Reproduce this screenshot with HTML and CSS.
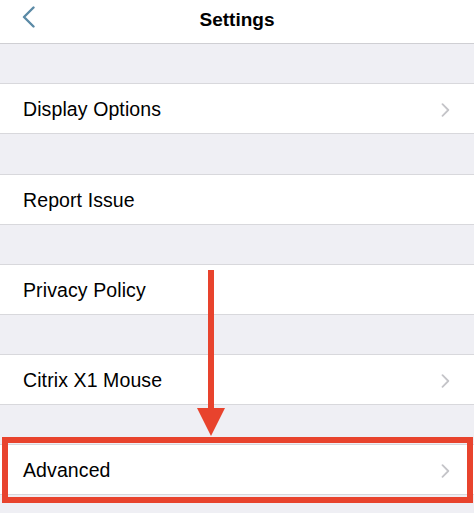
FILE: index.html
```html
<!DOCTYPE html>
<html>
<head>
<meta charset="utf-8">
<link rel="stylesheet" href="styles.css">
</head>
<body>
<div class="screen">
  <header class="nav">
    <svg class="back" width="14" height="22" viewBox="0 0 14 22"><path d="M11.5 1.5 L2 11 L11.5 20.5" fill="none" stroke="#5b8aa6" stroke-width="2.4" stroke-linecap="round" stroke-linejoin="round"/></svg>
    <h1 class="title">Settings</h1>
  </header>
  <div class="list">
    <div class="gap"></div>
    <div class="row"><span class="label">Display Options</span><svg class="chev" width="9" height="14" viewBox="0 0 9 14"><path d="M1.5 1.2 L7.3 7 L1.5 12.8" fill="none" stroke="#c4c4c8" stroke-width="1.8" stroke-linecap="round" stroke-linejoin="round"/></svg></div>
    <div class="gap"></div>
    <div class="row"><span class="label">Report Issue</span></div>
    <div class="gap"></div>
    <div class="row"><span class="label">Privacy Policy</span></div>
    <div class="gap"></div>
    <div class="row"><span class="label">Citrix X1 Mouse</span><svg class="chev" width="9" height="14" viewBox="0 0 9 14"><path d="M1.5 1.2 L7.3 7 L1.5 12.8" fill="none" stroke="#c4c4c8" stroke-width="1.8" stroke-linecap="round" stroke-linejoin="round"/></svg></div>
    <div class="gap"></div>
    <div class="row"><span class="label">Advanced</span><svg class="chev" width="9" height="14" viewBox="0 0 9 14"><path d="M1.5 1.2 L7.3 7 L1.5 12.8" fill="none" stroke="#c4c4c8" stroke-width="1.8" stroke-linecap="round" stroke-linejoin="round"/></svg></div>
    <div class="gap"></div>
  </div>
  <svg class="arrow" width="40" height="170" viewBox="0 0 40 170"><rect x="17" y="0" width="6" height="142" fill="#e8432d"/><polygon points="6,138 34,138 20,166" fill="#e8432d"/></svg>
  <div class="highlight"></div>
</div>
</body>
</html>
```
FILE: styles.css
```css
html, body {
  margin: 0;
  padding: 0;
  background: #efeff4;
}
.screen {
  position: relative;
  width: 474px;
  height: 513px;
  overflow: hidden;
  font-family: "Liberation Sans", Arial, sans-serif;
  color: #000;
}
.nav {
  height: 43px;
  background: #fff;
  border-bottom: 1px solid #cfcfd3;
  display: flex;
  align-items: center;
  justify-content: center;
  position: relative;
}
.back {
  position: absolute;
  left: 22px;
  top: 6px;
}
.title {
  margin: 0;
  font-size: 19px;
  font-weight: bold;
  letter-spacing: 0;
  padding-bottom: 4px;
}
.list {
  display: flex;
  flex-direction: column;
}
.gap {
  height: 39.25px;
  background: #efeff4;
}
.row {
  height: 49px;
  background: #fff;
  border-top: 1px solid #d8d8dc;
  border-bottom: 1px solid #d8d8dc;
  display: flex;
  align-items: center;
  justify-content: space-between;
  padding: 0 24px 0 23px;
}
.label {
  font-size: 19.5px;
  letter-spacing: 0.1px;
  padding-top: 2px;
}
.chev {
  display: block;
  margin-top: 2px;
}
.arrow {
  position: absolute;
  left: 191px;
  top: 270px;
}
.highlight {
  position: absolute;
  left: 2px;
  top: 437px;
  width: 459px;
  height: 54px;
  border: 6px solid #e8432d;
}
```
